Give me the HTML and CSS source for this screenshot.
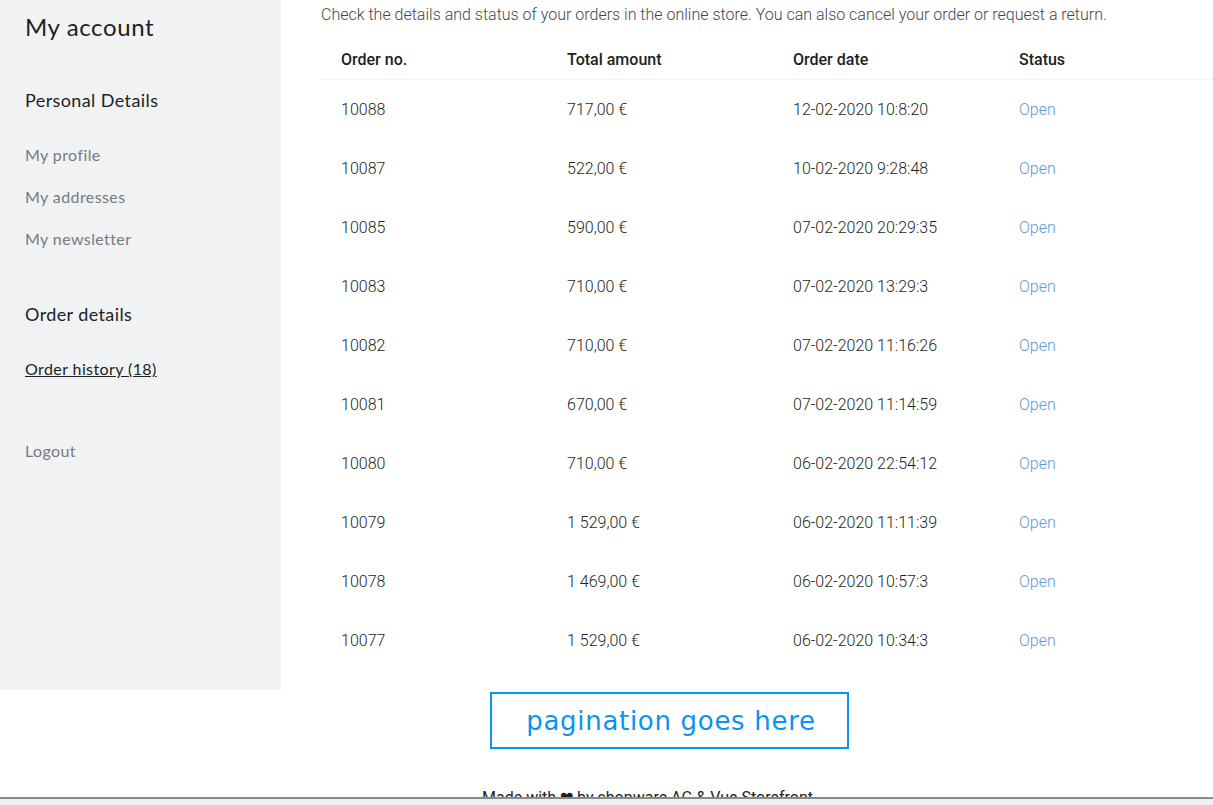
FILE: index.html
```html
<!DOCTYPE html>
<html lang="en">
<head>
<meta charset="utf-8">
<title>My account - Order history</title>
<link rel="stylesheet" href="styles.css">
</head>
<body>
<div class="layout">
  <aside class="sidebar">
    <h1 class="sidebar-title">My account</h1>
    <h2 class="sidebar-heading first">Personal Details</h2>
    <ul class="sidebar-list">
      <li><a class="sidebar-link">My profile</a></li>
      <li><a class="sidebar-link">My addresses</a></li>
      <li><a class="sidebar-link">My newsletter</a></li>
    </ul>
    <h2 class="sidebar-heading">Order details</h2>
    <ul class="sidebar-list">
      <li><a class="sidebar-link active">Order history (18)</a></li>
    </ul>
    <a class="sidebar-link logout">Logout</a>
  </aside>
  <main class="content">
    <p class="intro">Check the details and status of your orders in the online store. You can also cancel your order or request a return.</p>
    <table class="orders">
      <thead>
        <tr><th>Order no.</th><th>Total amount</th><th>Order date</th><th>Status</th></tr>
      </thead>
      <tbody>
        <tr><td>10088</td><td>717,00 €</td><td>12-02-2020 10:8:20</td><td class="status">Open</td></tr>
        <tr><td>10087</td><td>522,00 €</td><td>10-02-2020 9:28:48</td><td class="status">Open</td></tr>
        <tr><td>10085</td><td>590,00 €</td><td>07-02-2020 20:29:35</td><td class="status">Open</td></tr>
        <tr><td>10083</td><td>710,00 €</td><td>07-02-2020 13:29:3</td><td class="status">Open</td></tr>
        <tr><td>10082</td><td>710,00 €</td><td>07-02-2020 11:16:26</td><td class="status">Open</td></tr>
        <tr><td>10081</td><td>670,00 €</td><td>07-02-2020 11:14:59</td><td class="status">Open</td></tr>
        <tr><td>10080</td><td>710,00 €</td><td>06-02-2020 22:54:12</td><td class="status">Open</td></tr>
        <tr><td>10079</td><td>1 529,00 €</td><td>06-02-2020 11:11:39</td><td class="status">Open</td></tr>
        <tr><td>10078</td><td>1 469,00 €</td><td>06-02-2020 10:57:3</td><td class="status">Open</td></tr>
        <tr><td>10077</td><td>1 529,00 €</td><td>06-02-2020 10:34:3</td><td class="status">Open</td></tr>
      </tbody>
    </table>
  </main>
</div>
<div class="pagination-row">
  <div class="pagination">pagination goes here</div>
</div>
<footer class="footer">Made with <span class="heart">❤</span> by shopware AG &amp; Vue Storefront</footer>
<div class="scrollbar"></div>
</body>
</html>
```
FILE: styles.css
```css
html, body {
  margin: 0;
  padding: 0;
  background: #ffffff;
  overflow: hidden;
  height: 805px;
}

body {
  font-family: Roboto, "Liberation Sans", sans-serif;
  color: #1d1f22;
}

.layout {
  display: flex;
  align-items: stretch;
}

.sidebar {
  flex: 0 0 281px;
  box-sizing: border-box;
  background: #f1f2f3;
  padding: 10px 0 0 25px;
  font-family: Lato, "Open Sans", sans-serif;
  letter-spacing: 0.4px;
}

.sidebar-title {
  margin: 0;
  font-size: 24px;
  line-height: 34px;
  font-weight: 400;
  letter-spacing: 0.6px;
  color: #1d1f22;
}

.sidebar-heading {
  margin: 41px 0 0;
  font-size: 18px;
  line-height: 26px;
  font-weight: 400;
  color: #1d1f22;
}

.sidebar-heading.first {
  margin-top: 43px;
}

.sidebar-list {
  list-style: none;
  margin: 21px 0 0;
  padding: 0;
}

.sidebar-list li {
  height: 42px;
  line-height: 42px;
}

.sidebar-link {
  font-size: 16px;
  color: #777a83;
  text-decoration: none;
}

.sidebar-link.active {
  color: #1d1f22;
  text-decoration: underline;
}

.logout {
  display: block;
  margin-top: 40px;
  line-height: 42px;
}

.content {
  flex: 0 0 auto;
  padding: 0 0 21px 40px;
}

.intro {
  margin: 0;
  font-size: 16px;
  line-height: 30px;
  font-weight: 300;
  color: #43464e;
  white-space: nowrap;
}

.orders {
  margin-top: 9px;
  width: 904px;
  border-collapse: collapse;
  table-layout: fixed;
  font-size: 16px;
}

.orders th {
  text-align: left;
  font-weight: 500;
  height: 40px;
  padding: 2px 20px 0;
  box-sizing: border-box;
  vertical-align: middle;
  border-bottom: 1px solid #f1f2f3;
  color: #1d1f22;
}

.orders td {
  height: 59px;
  padding: 2px 20px 0;
  box-sizing: border-box;
  font-weight: 300;
  color: #1d1f22;
  vertical-align: middle;
}

.orders .status {
  color: #5c9bd6;
}

.pagination-row {
  display: flex;
  margin: 2px 0 0 490px;
}

.pagination {
  width: 359px;
  height: 57px;
  box-sizing: border-box;
  border: 2px solid #0a92f5;
  color: #0a92f5;
  font-family: "DejaVu Sans", sans-serif;
  font-size: 26px;
  letter-spacing: 0.7px;
  padding-left: 3px;
  display: flex;
  align-items: center;
  justify-content: center;
}

.footer {
  margin: 39px 0 0 482px;
  font-size: 16px;
  line-height: 20px;
  font-weight: 400;
  color: #1d1f22;
}

.heart {
  font-size: 16px;
}

.scrollbar {
  position: fixed;
  left: 0;
  right: 0;
  bottom: 0;
  height: 6px;
  background: #f0f0f0;
  border-top: 2px solid #8a8a8a;
}
```
